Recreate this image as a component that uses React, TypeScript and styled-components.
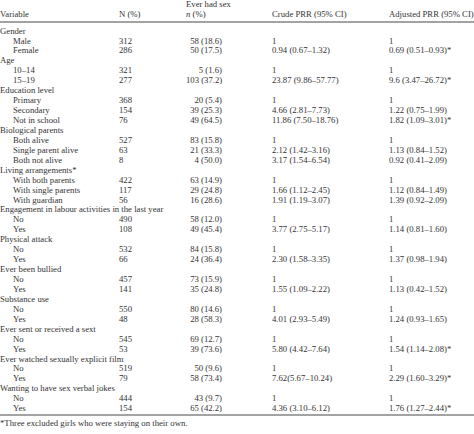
import React from "react";
import styled, { createGlobalStyle } from "styled-components";

const Global = createGlobalStyle`
  html, body { margin: 0; padding: 0; background: #ffffff; }
  body {
    font-family: "Liberation Serif", "Times New Roman", serif;
    font-size: 8.7px;
    line-height: 9.95px;
    color: #333333;
    overflow: hidden;
  }
`;

const Table = styled.div`
  width: 474px;
  overflow: hidden;
`;

const Row = styled.div`
  display: grid;
  grid-template-columns: 119px 67px 86px 117px 1fr;
  height: 9.95px;
  white-space: nowrap;
`;

const HeadBlock = styled.div`
  display: grid;
  grid-template-columns: 119px 67px 86px 117px 1fr;
  height: 20px;
  align-items: end;
  white-space: nowrap;
`;

const HeadCell = styled.div`
  line-height: 9.95px;
`;

const Rule = styled.div<{ $top: number; $bottom: number }>`
  height: 2px;
  background: #a3a3a3;
  margin-top: ${(p) => p.$top}px;
  margin-bottom: ${(p) => p.$bottom}px;
`;

const Body = styled.div`
  display: flex;
  flex-direction: column;
`;

const Cell = styled.div<{ $indent?: boolean; $right?: boolean }>`
  padding-left: ${(p) => (p.$indent ? "13px" : "0")};
  text-align: ${(p) => (p.$right ? "right" : "left")};
  padding-right: ${(p) => (p.$right ? "50px" : "0")};
  overflow: visible;
`;

const Footnote = styled.div`
  white-space: nowrap;
`;

type Item = [string, string, string, string, string];
type Group = { title: string; items: Item[] };

const groups: Group[] = [
  {
    title: "Gender",
    items: [
      ["Male", "312", "58 (18.6)", "1", "1"],
      ["Female", "286", "50 (17.5)", "0.94 (0.67–1.32)", "0.69 (0.51–0.93)*"],
    ],
  },
  {
    title: "Age",
    items: [
      ["10–14", "321", "5 (1.6)", "1", "1"],
      ["15–19", "277", "103 (37.2)", "23.87 (9.86–57.77)", "9.6 (3.47–26.72)*"],
    ],
  },
  {
    title: "Education level",
    items: [
      ["Primary", "368", "20 (5.4)", "1", "1"],
      ["Secondary", "154", "39 (25.3)", "4.66 (2.81–7.73)", "1.22 (0.75–1.99)"],
      ["Not in school", "76", "49 (64.5)", "11.86 (7.50–18.76)", "1.82 (1.09–3.01)*"],
    ],
  },
  {
    title: "Biological parents",
    items: [
      ["Both alive", "527", "83 (15.8)", "1", "1"],
      ["Single parent alive", "63", "21 (33.3)", "2.12 (1.42–3.16)", "1.13 (0.84–1.52)"],
      ["Both not alive", "8", "4 (50.0)", "3.17 (1.54–6.54)", "0.92 (0.41–2.09)"],
    ],
  },
  {
    title: "Living arrangements*",
    items: [
      ["With both parents", "422", "63 (14.9)", "1", "1"],
      ["With single parents", "117", "29 (24.8)", "1.66 (1.12–2.45)", "1.12 (0.84–1.49)"],
      ["With guardian", "56", "16 (28.6)", "1.91 (1.19–3.07)", "1.39 (0.92–2.09)"],
    ],
  },
  {
    title: "Engagement in labour activities in the last year",
    items: [
      ["No", "490", "58 (12.0)", "1", "1"],
      ["Yes", "108", "49 (45.4)", "3.77 (2.75–5.17)", "1.14 (0.81–1.60)"],
    ],
  },
  {
    title: "Physical attack",
    items: [
      ["No", "532", "84 (15.8)", "1", "1"],
      ["Yes", "66", "24 (36.4)", "2.30 (1.58–3.35)", "1.37 (0.98–1.94)"],
    ],
  },
  {
    title: "Ever been bullied",
    items: [
      ["No", "457", "73 (15.9)", "1", "1"],
      ["Yes", "141", "35 (24.8)", "1.55 (1.09–2.22)", "1.13 (0.42–1.52)"],
    ],
  },
  {
    title: "Substance use",
    items: [
      ["No", "550", "80 (14.6)", "1", "1"],
      ["Yes", "48", "28 (58.3)", "4.01 (2.93–5.49)", "1.24 (0.93–1.65)"],
    ],
  },
  {
    title: "Ever sent or received a sext",
    items: [
      ["No", "545", "69 (12.7)", "1", "1"],
      ["Yes", "53", "39 (73.6)", "5.80 (4.42–7.64)", "1.54 (1.14–2.08)*"],
    ],
  },
  {
    title: "Ever watched sexually explicit film",
    items: [
      ["No", "519", "50 (9.6)", "1", "1"],
      ["Yes", "79", "58 (73.4)", "7.62(5.67–10.24)", "2.29 (1.60–3.29)*"],
    ],
  },
  {
    title: "Wanting to have sex verbal jokes",
    items: [
      ["No", "444", "43 (9.7)", "1", "1"],
      ["Yes", "154", "65 (42.2)", "4.36 (3.10–6.12)", "1.76 (1.27–2.44)*"],
    ],
  },
];

export default function App() {
  return (
    <>
      <Global />
      <Table>
        <HeadBlock>
          <HeadCell>Variable</HeadCell>
          <HeadCell>N (%)</HeadCell>
          <HeadCell>
            Ever had sex
            <br />
            <i>n</i> (%)
          </HeadCell>
          <HeadCell>Crude PRR (95% CI)</HeadCell>
          <HeadCell>Adjusted PRR (95% CI)</HeadCell>
        </HeadBlock>
        <Rule $top={1} $bottom={3.6} />
        <Body>
          {groups.map((g) => (
            <React.Fragment key={g.title}>
              <Row>
                <Cell>{g.title}</Cell>
              </Row>
              {g.items.map((it, i) => (
                <Row key={i}>
                  <Cell $indent>{it[0]}</Cell>
                  <Cell>{it[1]}</Cell>
                  <Cell $right>{it[2]}</Cell>
                  <Cell>{it[3]}</Cell>
                  <Cell>{it[4]}</Cell>
                </Row>
              ))}
            </React.Fragment>
          ))}
        </Body>
        <Rule $top={0} $bottom={3} />
        <Footnote>*Three excluded girls who were staying on their own.</Footnote>
      </Table>
    </>
  );
}
